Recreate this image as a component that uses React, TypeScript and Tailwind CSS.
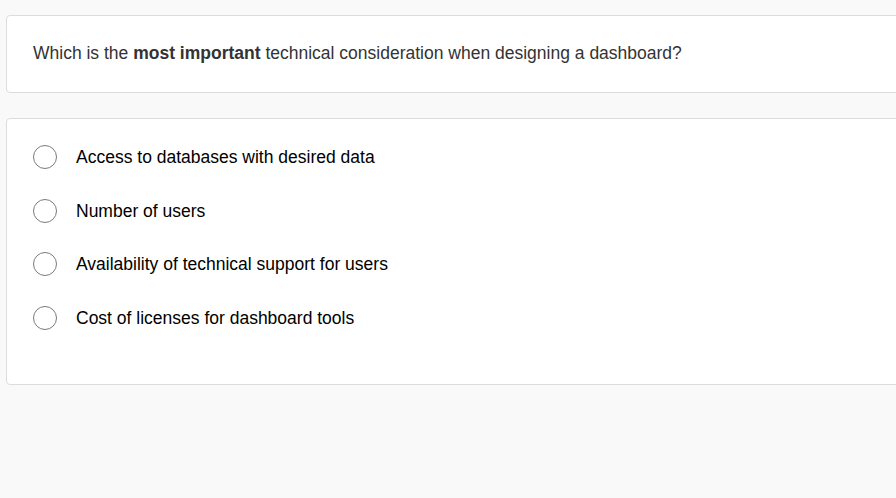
const options = [
  "Access to databases with desired data",
  "Number of users",
  "Availability of technical support for users",
  "Cost of licenses for dashboard tools",
];

export default function App() {
  return (
    <div className="min-h-[498px] w-full overflow-hidden bg-[#f9f9f9] pl-[6px] pt-[15px] font-['Liberation_Sans',Arial,sans-serif]">
      {/* Question */}
      <div className="-mr-10 rounded-[4px] border border-[#dcdcdc] bg-white pl-[26px] pt-[25px] pb-[27px]">
        <p className="text-[17.5px] leading-6 text-[#333333]">
          Which is the <strong className="font-bold">most important</strong> technical consideration when designing a
          dashboard?
        </p>
      </div>

      {/* Answers */}
      <div className="-mr-10 mt-[25px] flex h-[267px] flex-col gap-[29.5px] rounded-[4px] border border-[#dcdcdc] bg-white pl-[26px] pt-[26px]">
        {options.map((opt) => (
          <label key={opt} className="flex h-6 items-center gap-[19px]">
            <span className="h-6 w-6 shrink-0 rounded-full border-[1.5px] border-[#7a7a7a] bg-white" />
            <span className="text-[17.5px] leading-6 text-black">{opt}</span>
          </label>
        ))}
      </div>
    </div>
  );
}
